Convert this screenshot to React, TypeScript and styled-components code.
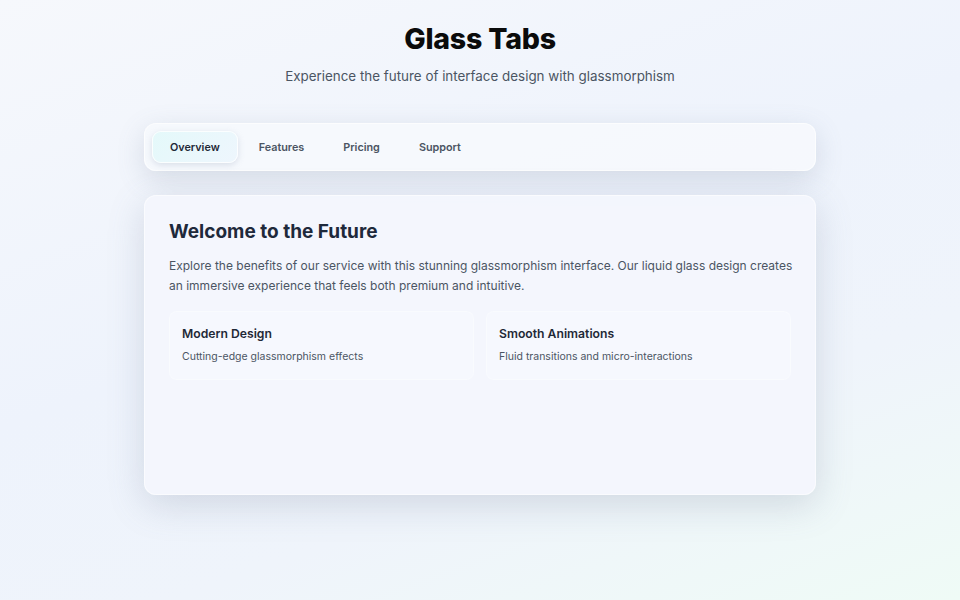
import React, { useState } from 'react';
import styled, { createGlobalStyle } from 'styled-components';

const GlobalStyle = createGlobalStyle`
  html, body {
    margin: 0;
    padding: 0;
  }
  body {
    font-family: Inter, 'Noto Sans', 'Liberation Sans', sans-serif;
    background: linear-gradient(160deg, #f6f8fc 0%, #eef3fc 45%, #eff4fb 70%, #effbf6 100%);
    min-height: 600px;
  }
`;

const Page = styled.div`
  min-height: 600px;
  display: flex;
  flex-direction: column;
  align-items: center;
  padding-top: 22px;
  box-sizing: border-box;
`;

const Title = styled.h1`
  margin: 0;
  font-size: 28.5px;
  line-height: 34px;
  font-weight: 800;
  color: #0b0b0b;
  letter-spacing: -0.2px;
`;

const Subtitle = styled.p`
  margin: 10px 0 0;
  font-size: 13.4px;
  line-height: 20px;
  color: #4b5563;
`;

const Container = styled.div`
  width: 672px;
  margin-top: 37px;
  display: flex;
  flex-direction: column;
  gap: 24px;
`;

const TabBar = styled.div`
  display: flex;
  gap: 3px;
  padding: 7px;
  border-radius: 12px;
  background: rgba(246, 248, 253, 0.92);
  border: 1px solid rgba(255, 255, 255, 0.6);
  box-shadow: 0 8px 28px rgba(100, 116, 139, 0.2);
`;

const TabButton = styled.button<{ $active?: boolean }>`
  height: 32px;
  padding: 0 18px;
  border: none;
  border-radius: 9px;
  font-family: inherit;
  font-size: 10.8px;
  font-weight: 600;
  cursor: pointer;
  color: ${(p) => (p.$active ? '#1f2937' : '#4b5563')};
  background: ${(p) =>
    p.$active ? 'linear-gradient(135deg, #e4f9fa 0%, #eef6fd 100%)' : 'transparent'};
  box-shadow: ${(p) =>
    p.$active ? '0 2px 6px rgba(148, 163, 184, 0.3), inset 0 0 0 1px rgba(255,255,255,0.8)' : 'none'};
`;

const Panel = styled.div`
  min-height: 300px;
  box-sizing: border-box;
  padding: 24px;
  border-radius: 12px;
  background: rgba(243, 246, 253, 0.95);
  border: 1px solid rgba(255, 255, 255, 0.6);
  box-shadow: 0 10px 36px rgba(100, 116, 139, 0.22);
`;

const PanelTitle = styled.h2`
  margin: 0;
  font-size: 19px;
  line-height: 24px;
  font-weight: 700;
  color: #1e293b;
`;

const PanelText = styled.p`
  margin: 12px -8px 0 0;
  font-size: 12px;
  line-height: 20px;
  color: #4b5563;
`;

const FeatureGrid = styled.div`
  display: grid;
  grid-template-columns: 1fr 1fr;
  gap: 12px;
  margin-top: 15px;
`;

const FeatureCard = styled.div`
  padding: 13px 12px 14px;
  border-radius: 8px;
  background: rgba(250, 252, 255, 0.35);
  border: 1px solid rgba(255, 255, 255, 0.25);
`;

const FeatureTitle = styled.h3`
  margin: 0;
  font-size: 12.2px;
  line-height: 17px;
  font-weight: 600;
  color: #1f2937;
`;

const FeatureText = styled.p`
  margin: 7px 0 0;
  font-size: 10.5px;
  line-height: 16px;
  color: #4b5563;
`;

const tabs = ['Overview', 'Features', 'Pricing', 'Support'];

const features = [
  { title: 'Modern Design', text: 'Cutting-edge glassmorphism effects' },
  { title: 'Smooth Animations', text: 'Fluid transitions and micro-interactions' }
];

const App: React.FC = () => {
  const [active, setActive] = useState('Overview');

  return (
    <>
      <GlobalStyle />
      <Page>
        <Title>Glass Tabs</Title>
        <Subtitle>Experience the future of interface design with glassmorphism</Subtitle>
        <Container>
          <TabBar>
            {tabs.map((tab) => (
              <TabButton key={tab} $active={tab === active} onClick={() => setActive(tab)}>
                {tab}
              </TabButton>
            ))}
          </TabBar>
          <Panel>
            <PanelTitle>Welcome to the Future</PanelTitle>
            <PanelText>
              Explore the benefits of our service with this stunning glassmorphism interface. Our
              liquid glass design creates an immersive experience that feels both premium and
              intuitive.
            </PanelText>
            <FeatureGrid>
              {features.map((f) => (
                <FeatureCard key={f.title}>
                  <FeatureTitle>{f.title}</FeatureTitle>
                  <FeatureText>{f.text}</FeatureText>
                </FeatureCard>
              ))}
            </FeatureGrid>
          </Panel>
        </Container>
      </Page>
    </>
  );
};

export default App;
